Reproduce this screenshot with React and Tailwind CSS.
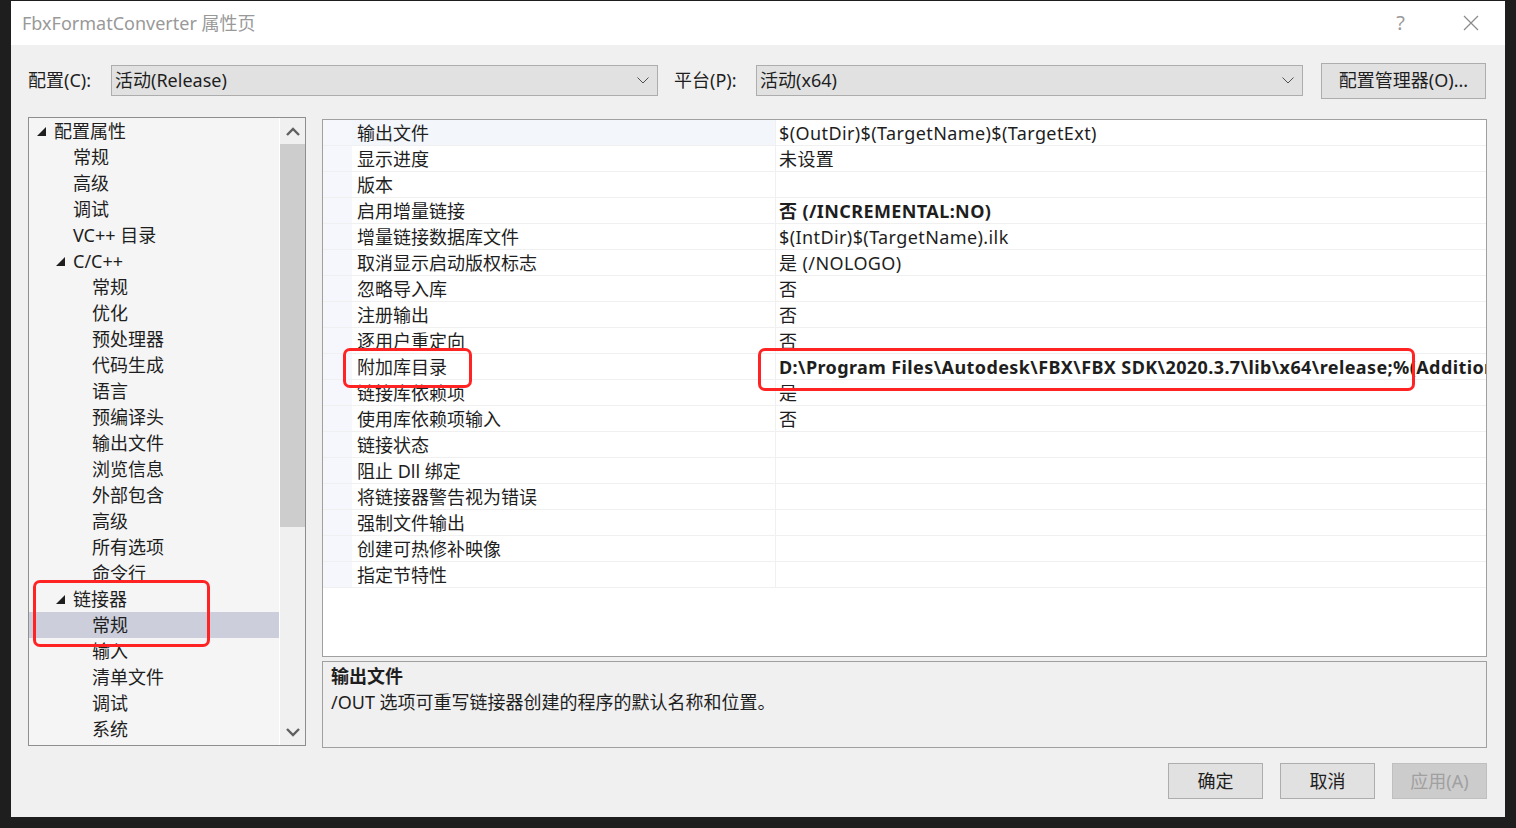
import React from "react";

const treeItems = [
  { label: "配置属性", level: 0, open: true },
  { label: "常规", level: 1 },
  { label: "高级", level: 1 },
  { label: "调试", level: 1 },
  { label: "VC++ 目录", level: 1 },
  { label: "C/C++", level: 1, open: true },
  { label: "常规", level: 2 },
  { label: "优化", level: 2 },
  { label: "预处理器", level: 2 },
  { label: "代码生成", level: 2 },
  { label: "语言", level: 2 },
  { label: "预编译头", level: 2 },
  { label: "输出文件", level: 2 },
  { label: "浏览信息", level: 2 },
  { label: "外部包含", level: 2 },
  { label: "高级", level: 2 },
  { label: "所有选项", level: 2 },
  { label: "命令行", level: 2 },
  { label: "链接器", level: 1, open: true },
  { label: "常规", level: 2, selected: true },
  { label: "输入", level: 2 },
  { label: "清单文件", level: 2 },
  { label: "调试", level: 2 },
  { label: "系统", level: 2 },
];

const props = [
  ["输出文件", "$(OutDir)$(TargetName)$(TargetExt)"],
  ["显示进度", "未设置"],
  ["版本", ""],
  ["启用增量链接", "否 (/INCREMENTAL:NO)", true],
  ["增量链接数据库文件", "$(IntDir)$(TargetName).ilk"],
  ["取消显示启动版权标志", "是 (/NOLOGO)"],
  ["忽略导入库", "否"],
  ["注册输出", "否"],
  ["逐用户重定向", "否"],
  ["附加库目录", "D:\\Program Files\\Autodesk\\FBX\\FBX SDK\\2020.3.7\\lib\\x64\\release;%(AdditionalLibraryDirectories)", true],
  ["链接库依赖项", "是"],
  ["使用库依赖项输入", "否"],
  ["链接状态", ""],
  ["阻止 Dll 绑定", ""],
  ["将链接器警告视为错误", ""],
  ["强制文件输出", ""],
  ["创建可热修补映像", ""],
  ["指定节特性", ""],
];

function Triangle() {
  return (
    <svg width="9" height="9" viewBox="0 0 9 9" className="shrink-0">
      <path d="M9 0 L9 9 L0 9 Z" fill="#1e1e1e" />
    </svg>
  );
}

function Chevron({ up }) {
  return (
    <svg width="14" height="9" viewBox="0 0 14 9">
      <path d={up ? "M1 8 L7 2 L13 8" : "M1 1 L7 7 L13 1"} fill="none" stroke="#606060" strokeWidth="2.4" />
    </svg>
  );
}

function Select({ value }) {
  return (
    <div className="flex h-[31px] w-[547px] shrink-0 items-center justify-between border border-[#adadad] bg-[#e1e1e1] pl-[3px] pr-[8px]">
      <span>{value}</span>
      <svg width="12" height="7" viewBox="0 0 12 7">
        <path d="M0.5 0.5 L6 6 L11.5 0.5" fill="none" stroke="#505050" strokeWidth="1" />
      </svg>
    </div>
  );
}

function Button({ children, disabled }) {
  return (
    <div
      className={
        disabled
          ? "flex h-[36px] w-[95px] items-center justify-center border border-[#bfbfbf] bg-[#cccccc] text-[#a0a0a0]"
          : "flex h-[36px] w-[95px] items-center justify-center border border-[#adadad] bg-[#e1e1e1]"
      }
    >
      {children}
    </div>
  );
}

export default function App() {
  return (
    <div className="relative h-[828px] w-[1516px] overflow-hidden bg-[#1e1e1e] pl-[11px] pt-px font-['Noto_Sans','Noto_Sans_CJK_SC',sans-serif] text-[18px] text-[#1e1e1e]">
      <div className="flex h-[816px] w-[1494px] flex-col bg-[#f0f0f0]">
        {/* title bar */}
        <div className="flex h-[44px] items-center justify-between bg-white pl-[11px] pr-[26px]">
          <span className="text-[#999999]">FbxFormatConverter 属性页</span>
          <div className="flex items-center gap-[58px] text-[#9a9a9a]">
            <span className="text-[20px]">?</span>
            <svg width="16" height="16" viewBox="0 0 16 16">
              <path d="M1 1 L15 15 M15 1 L1 15" stroke="#8a8a8a" strokeWidth="1.2" />
            </svg>
          </div>
        </div>

        <div className="flex flex-1 flex-col pl-[17px] pr-[18px]">
          {/* config row */}
          <div className="mt-[17px] flex h-[36px] items-center pt-px">
            <span className="w-[83px] shrink-0">配置(C):</span>
            <Select value="活动(Release)" />
            <span className="ml-[16px] w-[82px] shrink-0">平台(P):</span>
            <Select value="活动(x64)" />
            <div className="ml-[18px] flex h-[36px] w-[165px] shrink-0 items-center justify-center border border-[#adadad] bg-[#e1e1e1]">
              配置管理器(O)...
            </div>
          </div>

          <div className="mt-[19px] flex">
            {/* tree */}
            <div className="flex h-[629px] w-[278px] shrink-0 border border-[#8e8e8e] bg-[#f5f5f5]">
              <div className="min-w-0 flex-1 overflow-hidden">
                {treeItems.map((it, i) => (
                  <div
                    key={i}
                    className={
                      "flex h-[26px] items-center whitespace-nowrap " + (it.selected ? "bg-[#cccedb]" : "")
                    }
                    style={{ paddingLeft: it.level === 0 ? 8 : it.level === 1 ? 27 : 46 }}
                  >
                    <span className="flex w-[17px] shrink-0 items-center">{it.open ? <Triangle /> : null}</span>
                    <span>{it.label}</span>
                  </div>
                ))}
              </div>
              <div className="flex w-[26px] shrink-0 flex-col border-l border-white bg-[#f0f0f0]">
                <div className="flex h-[26px] items-center justify-center">
                  <Chevron up />
                </div>
                <div className="h-[383px] bg-[#cdcdcd]"></div>
                <div className="flex-1"></div>
                <div className="flex h-[26px] items-center justify-center">
                  <Chevron />
                </div>
              </div>
            </div>

            {/* right column */}
            <div className="ml-[16px] mt-[2px] flex min-w-0 flex-1 flex-col">
              <div className="h-[538px] overflow-hidden border border-[#a0a0a0] bg-white">
                {props.map(([name, value, bold], i) => (
                  <div key={i} className="flex h-[26px] border-b border-[#f0f0f0]">
                    <div className="w-[29px] shrink-0 bg-[#f5f7fc]"></div>
                    <div
                      className={
                        "w-[424px] shrink-0 whitespace-nowrap border-r border-[#f0f0f0] pl-[5px] leading-[26px] " +
                        (i === 0 ? "bg-[#f3f6fb]" : "")
                      }
                    >
                      {name}
                    </div>
                    <div
                      className={
                        "min-w-0 flex-1 overflow-hidden whitespace-nowrap pl-[3px] leading-[26px] tracking-[0.4px] " +
                        (bold ? "font-bold" : "")
                      }
                    >
                      {value}
                    </div>
                  </div>
                ))}
              </div>
              <div className="mt-[4px] h-[87px] border border-[#a0a0a0] bg-[#f0f0f0] pl-[8px] pt-[1px] leading-[26px]">
                <div className="font-bold">输出文件</div>
                <div>/OUT 选项可重写链接器创建的程序的默认名称和位置。</div>
              </div>
            </div>
          </div>

          {/* buttons */}
          <div className="mt-[15px] flex justify-end gap-[17px]">
            <Button>确定</Button>
            <Button>取消</Button>
            <Button disabled>应用(A)</Button>
          </div>
        </div>
      </div>

      {/* red annotation boxes */}
      <div className="absolute left-[33px] top-[580px] h-[67px] w-[177px] rounded-[7px] border-[3px] border-[#ff2323]"></div>
      <div className="absolute left-[343px] top-[348px] h-[40px] w-[129px] rounded-[7px] border-[3px] border-[#ff2323]"></div>
      <div className="absolute left-[758px] top-[348px] h-[43px] w-[657px] rounded-[7px] border-[3px] border-[#ff2323]"></div>
    </div>
  );
}
